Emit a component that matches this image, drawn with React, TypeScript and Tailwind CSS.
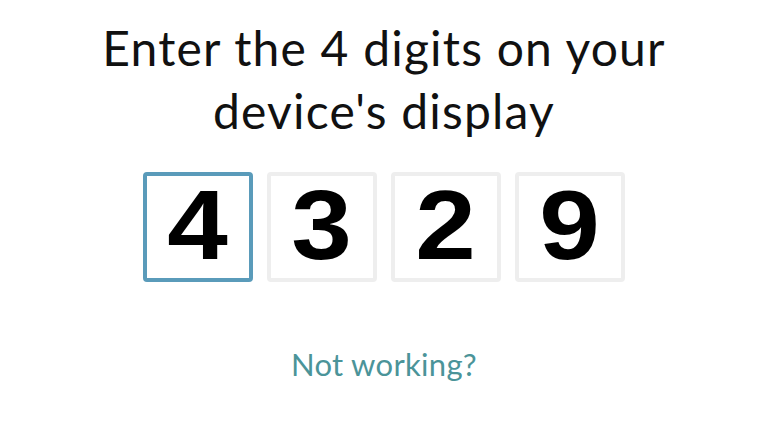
export default function App() {
  const digits = ["4", "3", "2", "9"];

  return (
    <div className="min-h-screen w-full bg-white flex flex-col items-center">
      <h1
        className="mt-[16px] text-center text-[48px] leading-[63px] font-normal tracking-[1.2px] text-[#111]"
        style={{ fontFamily: "Lato, 'Noto Sans', sans-serif" }}
      >
        Enter the 4 digits on your
        <br />
        device's display
      </h1>

      <div className="mt-[30px] flex gap-[14px]">
        {digits.map((d, i) => (
          <div
            key={i}
            className={
              i === 0
                ? "w-[110px] h-[110px] rounded-[4px] border-[4px] border-[#5a9bba] flex items-center justify-center"
                : "w-[110px] h-[110px] rounded-[4px] border-[4px] border-[#eeeeee] flex items-center justify-center"
            }
          >
            <span
              className="text-[99px] leading-none font-bold text-black -mt-[6px] scale-x-[1.1]"
              style={{ fontFamily: "'Liberation Sans', Arial, sans-serif" }}
            >
              {d}
            </span>
          </div>
        ))}
      </div>

      <a
        className="mt-[63px] text-[31px] leading-[38px] tracking-[0.3px] text-[#4b9499]"
        style={{ fontFamily: "Lato, 'Noto Sans', sans-serif" }}
      >
        Not working?
      </a>
    </div>
  );
}
